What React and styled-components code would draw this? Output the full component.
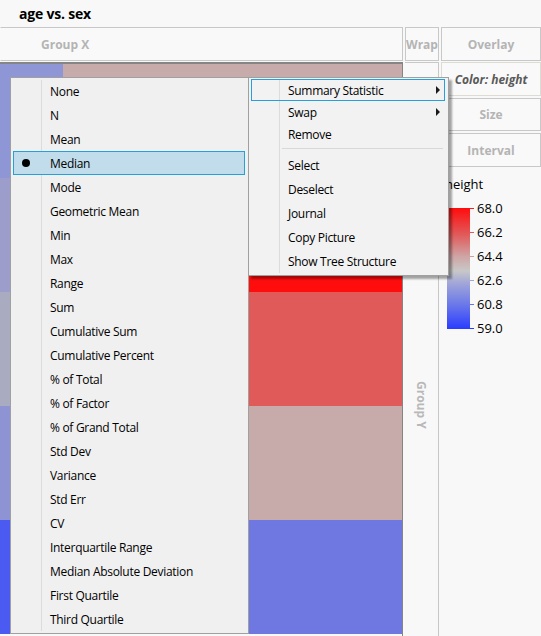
import { Fragment } from "react";
import styled, { createGlobalStyle } from "styled-components";

const GlobalStyle = createGlobalStyle`
  html, body {
    margin: 0;
    padding: 0;
    background: #f8f8f8;
  }
  body {
    font-family: "Open Sans", "Noto Sans", sans-serif;
    font-size: 12px;
    color: #000000;
  }
`;

const Page = styled.div`
  position: relative;
  width: 541px;
  height: 636px;
  overflow: hidden;
  background: #f8f8f8;
`;

const Title = styled.h1`
  margin: 0;
  height: 27px;
  padding-left: 19px;
  font-size: 14px;
  font-weight: 700;
  line-height: 28px;
  letter-spacing: -0.2px;
`;

const Board = styled.div`
  display: grid;
  grid-template-columns: 403px 34px 100px;
  grid-template-rows: 34px 600px;
  column-gap: 2px;
  row-gap: 1px;
`;

const DropZone = styled.div`
  box-sizing: border-box;
  display: flex;
  align-items: center;
  justify-content: ${(p) => (p.$start ? "flex-start" : "center")};
  padding-left: ${(p) => (p.$start ? "40px" : "0")};
  border: 1px solid ${(p) => (p.$active ? "#dcdcd2" : "#c8c8c8")};
  border-left-color: ${(p) => (p.$open ? "transparent" : p.$active ? "#dcdcd2" : "#c8c8c8")};
  background: #f9f9f9;
  color: ${(p) => (p.$active ? "#5a5a5a" : "#b4b4b4")};
  font-size: 12px;
  font-weight: 700;
  font-style: ${(p) => (p.$active ? "italic" : "normal")};
  height: ${(p) => p.$h || "auto"};
  white-space: nowrap;
  overflow: hidden;
`;

const Heatmap = styled.div`
  display: grid;
  grid-template-columns: 63px 1fr;
  grid-auto-rows: 114px;
  align-content: start;
  border-top: 2px solid #858585;
  border-right: 1px solid #858585;
`;

const Cell = styled.div`
  background: ${(p) => p.$c};
`;

const GroupY = styled.div`
  box-sizing: border-box;
  border: 1px solid #c8c8c8;
  border-left: none;
  height: 700px;
  display: flex;
  justify-content: center;
  padding-top: 318px;
  color: #b8b8b8;
  font-size: 12px;
  font-weight: 700;
`;

const VerticalText = styled.span`
  writing-mode: vertical-rl;
  height: max-content;
`;

const SideColumn = styled.div`
  display: flex;
  flex-direction: column;
  gap: 2px;
`;

const Legend = styled.div`
  padding: 4px 0 0 4px;
`;

const LegendTitle = styled.div`
  font-size: 13px;
  height: 22px;
  line-height: 22px;
`;

const Scale = styled.div`
  display: flex;
  margin-top: 13px;
  padding-left: 2px;
`;

const Bar = styled.div`
  width: 23px;
  height: 121px;
  background: linear-gradient(
    to bottom,
    #ff0c0c 0%,
    #e15a5a 22%,
    #cfa4a4 40%,
    #c8c8c8 52%,
    #a2a6d8 62%,
    #6a78ea 80%,
    #2a3cff 100%
  );
`;

const Ticks = styled.div`
  display: flex;
  flex-direction: column;
  gap: 8px;
  margin-top: -8px;
`;

const TickRow = styled.div`
  display: flex;
  align-items: center;
  height: 16px;
  font-size: 13px;
`;

const TickMark = styled.span`
  width: 4px;
  height: 1px;
  margin-right: 3px;
  background: ${(p) => p.$c};
`;

const Menu = styled.div`
  position: absolute;
  left: ${(p) => p.$x}px;
  top: ${(p) => p.$y}px;
  width: ${(p) => p.$w}px;
  box-sizing: border-box;
  padding: 1px 0 2px;
  background: ${(p) => p.$bg};
  border: 1px solid #a0a0a0;
  box-shadow: ${(p) => (p.$shadow ? "3px 3px 2px rgba(0, 0, 0, 0.35)" : "none")};
  background-image: linear-gradient(#dcdcdc, #dcdcdc);
  background-repeat: no-repeat;
  background-size: 1px calc(100% - 4px);
  background-position: ${(p) => p.$gutter}px 2px;
`;

const Item = styled.div`
  position: relative;
  box-sizing: border-box;
  display: flex;
  align-items: center;
  height: ${(p) => (p.$compact ? 22 : 24)}px;
  margin: 0 3px 0 2px;
  padding-left: ${(p) => p.$indent}px;
  border: 1px solid ${(p) => (p.$hot ? "#26a0da" : "transparent")};
  background: ${(p) => (p.$fill ? "#c1dcea" : "transparent")};
  font-size: 12px;
  letter-spacing: -0.3px;
  white-space: nowrap;
`;

const Bullet = styled.span`
  position: absolute;
  left: 8px;
  top: 50%;
  width: 8px;
  height: 8px;
  margin-top: -4px;
  border-radius: 50%;
  background: #000000;
`;

const Arrow = styled.span`
  position: absolute;
  right: 4px;
  top: 50%;
  margin-top: -4px;
  border-left: 4px solid #1a1a1a;
  border-top: 4px solid transparent;
  border-bottom: 4px solid transparent;
`;

const Separator = styled.div`
  height: 1px;
  margin: 3px 5px 4px 33px;
  background: #d8d8d8;
`;

const stats = [
  "None",
  "N",
  "Mean",
  "Median",
  "Mode",
  "Geometric Mean",
  "Min",
  "Max",
  "Range",
  "Sum",
  "Cumulative Sum",
  "Cumulative Percent",
  "% of Total",
  "% of Factor",
  "% of Grand Total",
  "Std Dev",
  "Variance",
  "Std Err",
  "CV",
  "Interquartile Range",
  "Median Absolute Deviation",
  "First Quartile",
  "Third Quartile",
];

const rows = [
  ["#8e96d6", "#c7aaaa"],
  ["#9d9dcc", "#ff0d0d"],
  ["#a9abc1", "#e05a5a"],
  ["#8e94d3", "#c7abab"],
  ["#4b5af0", "#6f78e0"],
];

const ticks = [
  ["68.0", "#ff1a1a"],
  ["66.2", "#e05858"],
  ["64.4", "#cf9e9e"],
  ["62.6", "#a3a6d8"],
  ["60.8", "#6474ee"],
  ["59.0", "#2a3cff"],
];

export default function App() {
  return (
    <Page>
      <GlobalStyle />
      <Title>age vs. sex</Title>
      <Board>
        <DropZone $start $open>Group X</DropZone>
        <DropZone>Wrap</DropZone>
        <DropZone>Overlay</DropZone>

        <Heatmap>
          {rows.map(([a, b], i) => (
            <Fragment key={i}>
              <Cell $c={a} />
              <Cell $c={b} />
            </Fragment>
          ))}
        </Heatmap>
        <GroupY>
          <VerticalText>Group Y</VerticalText>
        </GroupY>
        <SideColumn>
          <DropZone $active $h="34px">Color: height</DropZone>
          <DropZone $h="33px">Size</DropZone>
          <DropZone $h="34px">Interval</DropZone>
          <Legend>
            <LegendTitle>height</LegendTitle>
            <Scale>
              <Bar />
              <Ticks>
                {ticks.map(([label, c]) => (
                  <TickRow key={label}>
                    <TickMark $c={c} />
                    {label}
                  </TickRow>
                ))}
              </Ticks>
            </Scale>
          </Legend>
        </SideColumn>
      </Board>

      <Menu $x={10} $y={77} $w={239} $bg="#f0f0f0" $gutter={30}>
        {stats.map((s) => (
          <Item key={s} $indent={36} $hot={s === "Median"} $fill={s === "Median"}>
            {s === "Median" && <Bullet />}
            {s}
          </Item>
        ))}
      </Menu>

      <Menu $x={248} $y={77} $w={201} $bg="#f2f2f2" $gutter={30} $shadow>
        <Item $compact $indent={36} $hot>
          Summary Statistic
          <Arrow />
        </Item>
        <Item $compact $indent={36}>
          Swap
          <Arrow />
        </Item>
        <Item $compact $indent={36}>Remove</Item>
        <Separator />
        <Item $indent={36}>Select</Item>
        <Item $indent={36}>Deselect</Item>
        <Item $indent={36}>Journal</Item>
        <Item $indent={36}>Copy Picture</Item>
        <Item $indent={36}>Show Tree Structure</Item>
      </Menu>
    </Page>
  );
}
